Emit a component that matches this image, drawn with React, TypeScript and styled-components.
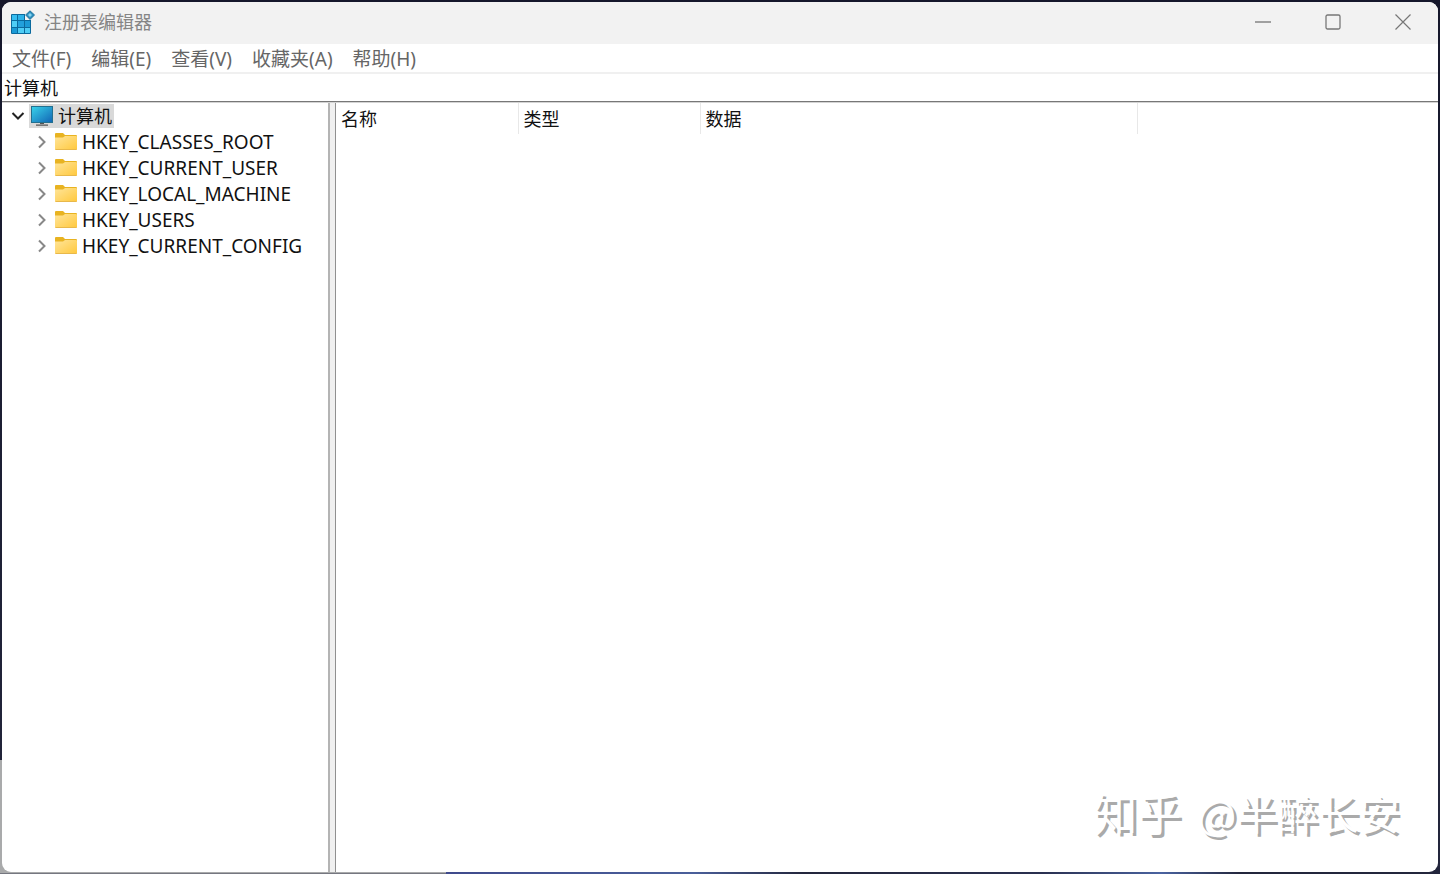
import React from "react";
import styled, { createGlobalStyle } from "styled-components";

const GlobalStyle = createGlobalStyle`
  * { box-sizing: border-box; }
  html, body, #root { height: 100%; margin: 0; }
  body {
    background: #15172b;
    color: #111;
    font-family: "Noto Sans", "Noto Sans CJK SC", sans-serif;
    font-size: 18px;
    overflow: hidden;
  }
  button { font: inherit; color: inherit; background: none; border: 0; padding: 0; margin: 0; }
`;

const Desktop = styled.div`
  height: 100%;
  padding: 2px;
  background:
    linear-gradient(#a9aaab, #a9aaab) left bottom / 31% 13% no-repeat,
    linear-gradient(to right, #3f4a8c, #4a5f9a 25%, #23263c 36%, #2a3050 60%, #4a63a0 72%, #23263c 80%) right bottom / 69% 3px no-repeat,
    linear-gradient(to bottom, #15172b, #23263c);
`;

const Window = styled.main`
  position: relative;
  display: flex;
  flex-direction: column;
  height: 100%;
  background: #fff;
  border-radius: 9px;
  overflow: hidden;
`;

const TitleBar = styled.header`
  display: flex;
  align-items: center;
  height: 42px;
  padding: 0 0 2px 8px;
  background: #f2f2f2;
  color: #858585;
`;

const Title = styled.h1`
  flex: 1;
  margin: 0 0 0 9px;
  font-size: 18px;
  line-height: 24px;
  font-weight: 400;
`;

const CaptionButton = styled.button`
  display: grid;
  place-items: center;
  width: 70px;
  height: 40px;
`;

const MenuBar = styled.nav`
  display: flex;
  align-items: center;
  gap: 20px;
  height: 30px;
  padding: 2px 0 0 10px;
  border-bottom: 2px solid #f0f0f0;
  color: #666;
  font-size: 19px;
  line-height: 26px;
`;

const AddressBar = styled.input`
  width: 100%;
  height: 28px;
  padding: 0 2px 2px;
  border: 0;
  border-bottom: 1px solid #777;
  outline: 0;
  background: #fff;
  color: #111;
  font: inherit;
`;

const Panes = styled.div`
  display: flex;
  flex: 1;
  min-height: 0;
  border-top: 1px solid #d4d4d4;
`;

const TreePane = styled.aside`
  width: 326px;
`;

const Splitter = styled.div`
  width: 8px;
  border-left: 2px solid #b4b4b4;
  border-right: 1px solid #909090;
  background: #f0f0f0;
`;

const Tree = styled.ul`
  margin: 0;
  padding: 0;
  list-style: none;
`;

const TreeRow = styled.li<{ $level: number }>`
  display: flex;
  align-items: center;
  height: 26px;
  padding-left: ${(p) => 5 + p.$level * 24}px;
`;

const Expander = styled.button`
  display: grid;
  place-items: center;
  width: 22px;
  height: 24px;
`;

const NodeLabel = styled.span<{ $selected?: boolean }>`
  display: flex;
  align-items: center;
  gap: 5px;
  height: 24px;
  padding: 0 2px;
  background: ${(p) => (p.$selected ? "#d9d9d9" : "transparent")};
  font-size: ${(p) => (p.$selected ? 18 : 19)}px;
  line-height: 24px;
  white-space: nowrap;
`;

const ListPane = styled.section`
  flex: 1;
  min-width: 0;
`;

const ValueTable = styled.table`
  border-collapse: collapse;
  table-layout: fixed;
`;

const HeadCell = styled.th<{ $width: number }>`
  width: ${(p) => p.$width}px;
  height: 31px;
  padding: 0 5px 2px;
  border-right: 1px solid #e8e8e8;
  font-weight: 400;
  text-align: left;
`;

const Watermark = styled.div`
  position: absolute;
  right: 38px;
  bottom: 30px;
  display: flex;
  align-items: center;
  gap: 16px;
  color: #fff;
  font-family: "Noto Sans CJK SC", sans-serif;
  font-size: 41px;
  font-weight: 400;
  line-height: 60px;
  text-shadow: 3px 3px 0 #aaa;
  white-space: nowrap;
`;

const WatermarkBrand = styled.span`
  font-size: 44px;
`;

const RegistryIcon = () => (
  <svg width="25" height="24" viewBox="0 0 25 24" aria-hidden="true">
    <rect x="1" y="4" width="20" height="20" rx="1" fill="#0b6a9e" />
    <g fill="#4fcdf5">
      <rect x="2" y="5" width="5" height="5" fill="#35bdf0" />
      <rect x="8" y="5" width="6" height="5" fill="#2cb2e8" />
      <rect x="2" y="11" width="5" height="6" />
      <rect x="8" y="11" width="6" height="6" fill="#22a0dc" />
      <rect x="15" y="11" width="5" height="6" fill="#1b9ad6" />
      <rect x="2" y="18" width="5" height="5" fill="#1b9ad6" />
      <rect x="8" y="18" width="6" height="5" />
      <rect x="15" y="18" width="5" height="5" />
    </g>
    <path d="M15 0h10v10H15z" fill="#f2f2f2" />
    <path d="M20 .8 24.500 5 20 9.400 15.600 5z" fill="#2b8fc0" stroke="#23749c" strokeLinejoin="round" />
    <path d="m20 3 2 2-2 2-2-2z" fill="#8ad6ef" />
  </svg>
);

const ComputerIcon = () => (
  <svg width="22" height="22" viewBox="0 0 22 22" aria-hidden="true">
    <defs>
      <linearGradient id="screen" x1="0" y1="0" x2="1" y2="1">
        <stop offset="0" stopColor="#39d3ea" />
        <stop offset="1" stopColor="#1164b4" />
      </linearGradient>
    </defs>
    <rect x=".5" y="1.500" width="21" height="16" fill="url(#screen)" stroke="#23708f" />
    <path d="M9 18h4v1H9zM5 19.500h12v1.300H5z" fill="#555" />
  </svg>
);

const FolderIcon = () => (
  <svg width="22" height="18" viewBox="0 0 22 18" aria-hidden="true">
    <defs>
      <linearGradient id="folder" x1="0" y1="0" x2="1" y2="1">
        <stop offset="0" stopColor="#ffe59a" />
        <stop offset="1" stopColor="#ffc83c" />
      </linearGradient>
    </defs>
    <path d="M0 1Q0 0 1 0h7l2 2h11q1 0 1 1v4H0z" fill="#e8b321" />
    <path d="M0 4.500h8L10 3h11q1 0 1 1v12q0 1-1 1H1q-1 0-1-1z" fill="url(#folder)" />
    <path d="M.5 16.500h21" stroke="#e8b84b" />
  </svg>
);

const keys = [
  "HKEY_CLASSES_ROOT",
  "HKEY_CURRENT_USER",
  "HKEY_LOCAL_MACHINE",
  "HKEY_USERS",
  "HKEY_CURRENT_CONFIG",
];
const menus = ["文件(F)", "编辑(E)", "查看(V)", "收藏夹(A)", "帮助(H)"];
const columns = [
  { name: "名称", width: 182 },
  { name: "类型", width: 182 },
  { name: "数据", width: 437 },
];

export default function App() {
  return (
    <Desktop>
      <GlobalStyle />
      <Window>
        <TitleBar>
          <RegistryIcon />
          <Title>注册表编辑器</Title>
          <CaptionButton aria-label="最小化">
            <svg width="16" height="16" fill="none" stroke="#858585"><path d="M0 8h16" strokeWidth="1.300" /></svg>
          </CaptionButton>
          <CaptionButton aria-label="最大化">
            <svg width="16" height="16" fill="none" stroke="#777"><rect x="1" y="1" width="14" height="14" rx="1.500" strokeWidth="1.300" /></svg>
          </CaptionButton>
          <CaptionButton aria-label="关闭">
            <svg width="16" height="16" fill="none" stroke="#777"><path d="m.5.5 15 15m0-15-15 15" strokeWidth="1.200" /></svg>
          </CaptionButton>
        </TitleBar>
        <MenuBar>
          {menus.map((m) => (
            <button key={m}>{m}</button>
          ))}
        </MenuBar>
        <AddressBar aria-label="地址" defaultValue="计算机" />
        <Panes>
          <TreePane>
            <Tree>
              <TreeRow $level={0}>
                <Expander aria-label="折叠">
                  <svg width="14" height="10" fill="none" stroke="#222" strokeWidth="2"><path d="m1.500 2 5.500 5.500L12.500 2" /></svg>
                </Expander>
                <NodeLabel $selected>
                  <ComputerIcon />
                  计算机
                </NodeLabel>
              </TreeRow>
              {keys.map((k) => (
                <TreeRow key={k} $level={1}>
                  <Expander aria-label="展开">
                    <svg width="10" height="14" fill="none" stroke="#888" strokeWidth="2"><path d="M2 1.500 7.500 7 2 12.500" /></svg>
                  </Expander>
                  <NodeLabel>
                    <FolderIcon />
                    {k}
                  </NodeLabel>
                </TreeRow>
              ))}
            </Tree>
          </TreePane>
          <Splitter />
          <ListPane>
            <ValueTable>
              <thead>
                <tr>
                  {columns.map((c) => (
                    <HeadCell key={c.name} $width={c.width}>{c.name}</HeadCell>
                  ))}
                </tr>
              </thead>
            </ValueTable>
          </ListPane>
        </Panes>
        <Watermark>
          <WatermarkBrand>知乎</WatermarkBrand>
          <span>@半醉长安</span>
        </Watermark>
      </Window>
    </Desktop>
  );
}
